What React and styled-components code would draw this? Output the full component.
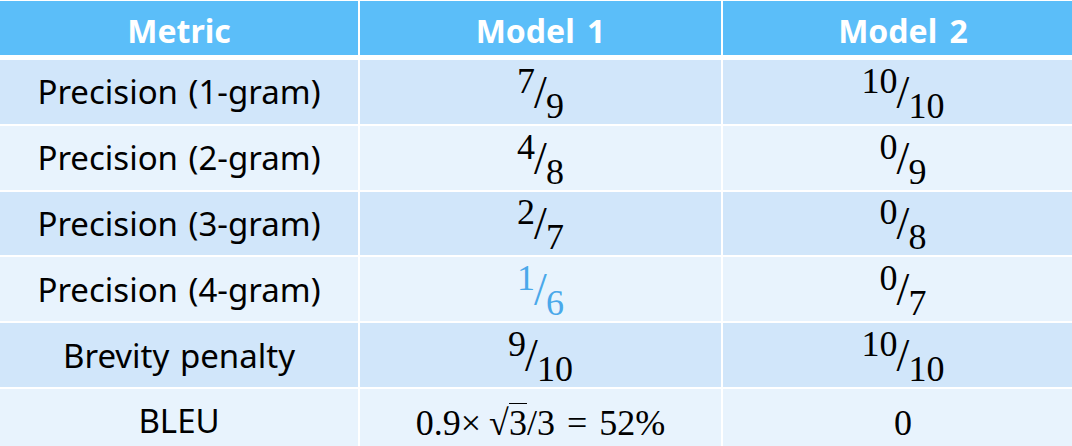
import styled, { createGlobalStyle } from "styled-components";

const GlobalStyle = createGlobalStyle`
  html, body {
    margin: 0;
    padding: 0;
    background: #ffffff;
    overflow: hidden;
  }
`;

const rows = [
  { metric: "Precision (1-gram)", m1: ["7", "9"], m2: ["10", "10"] },
  { metric: "Precision (2-gram)", m1: ["4", "8"], m2: ["0", "9"] },
  { metric: "Precision (3-gram)", m1: ["2", "7"], m2: ["0", "8"] },
  { metric: "Precision (4-gram)", m1: ["1", "6"], m2: ["0", "7"], accent: true },
  { metric: "Brevity penalty", m1: ["9", "10"], m2: ["10", "10"] },
];

function Fraction({ num, den, accent }) {
  return (
    <Frac $accent={accent}>
      <Num>{num}</Num>
      <Slash>/</Slash>
      <Den>{den}</Den>
    </Frac>
  );
}

function App() {
  return (
    <Page>
      <GlobalStyle />
      <Table>
        <HeadCell>Metric</HeadCell>
        <HeadCell>Model 1</HeadCell>
        <HeadCell>Model 2</HeadCell>
        {rows.map((row, i) => (
          <Row key={row.metric} $dark={i % 2 === 0}>
            <TextCell>{row.metric}</TextCell>
            <MathCell>
              <Fraction num={row.m1[0]} den={row.m1[1]} accent={row.accent} />
            </MathCell>
            <MathCell>
              <Fraction num={row.m2[0]} den={row.m2[1]} />
            </MathCell>
          </Row>
        ))}
        <Row $dark={false}>
          <TextCell>BLEU</TextCell>
          <MathCell>
            <Formula>
              0.9×
              <Sqrt>
                √<Radicand>3</Radicand>
              </Sqrt>
              /3<Op>=</Op>52%
            </Formula>
          </MathCell>
          <MathCell>
            <Formula>0</Formula>
          </MathCell>
        </Row>
      </Table>
    </Page>
  );
}

export default App;

const Page = styled.div`
  width: 1072px;
  height: 446px;
  overflow: hidden;
  padding-top: 1px;
  box-sizing: border-box;
`;

const Table = styled.div`
  display: grid;
  grid-template-columns: 358px 361px 360px;
  grid-template-rows: 57px repeat(6, 63.8px);
  column-gap: 2px;
  row-gap: 2px;
  width: 1083px;
`;

const HeadCell = styled.div`
  display: flex;
  align-items: center;
  justify-content: center;
  margin-bottom: 3px;
  padding-top: 4px;
  box-sizing: border-box;
  background: #5bbef9;
  color: #ffffff;
  font-family: "Noto Sans", "Open Sans", sans-serif;
  font-weight: 700;
  font-size: 32px;
  word-spacing: 4px;
`;

const Row = styled.div`
  display: contents;
  & > div {
    background: ${(p) => (p.$dark ? "#d1e6fa" : "#e8f3fd")};
  }
`;

const TextCell = styled.div`
  display: flex;
  align-items: center;
  justify-content: center;
  color: #000000;
  font-family: "Noto Sans", "Open Sans", sans-serif;
  font-size: 33px;
  word-spacing: 2px;
`;

const MathCell = styled.div`
  display: flex;
  align-items: center;
  justify-content: center;
  color: #000000;
  font-family: "Liberation Serif", "DejaVu Serif", serif;
  font-size: 36px;
`;

const Frac = styled.span`
  display: inline-flex;
  height: 50px;
  color: ${(p) => (p.$accent ? "#4aa8ea" : "#000000")};
  line-height: 1;
`;

const Num = styled.span`
  font-size: 36px;
  align-self: flex-start;
  margin-top: -4px;
`;

const Slash = styled.span`
  font-size: 46px;
  align-self: center;
  margin: 2px -1px 0;
`;

const Den = styled.span`
  font-size: 36px;
  align-self: flex-end;
  margin-bottom: -7px;
`;

const Formula = styled.span`
  display: inline-flex;
  align-items: baseline;
  white-space: pre;
  font-size: 36px;
  padding-top: 4px;
`;

const Sqrt = styled.span`
  display: inline-flex;
  align-items: baseline;
  margin-left: 8px;
`;

const Radicand = styled.span`
  border-top: 1.5px solid #000000;
  line-height: 1;
  padding-top: 1px;
`;

const Op = styled.span`
  margin: 0 12px;
`;
